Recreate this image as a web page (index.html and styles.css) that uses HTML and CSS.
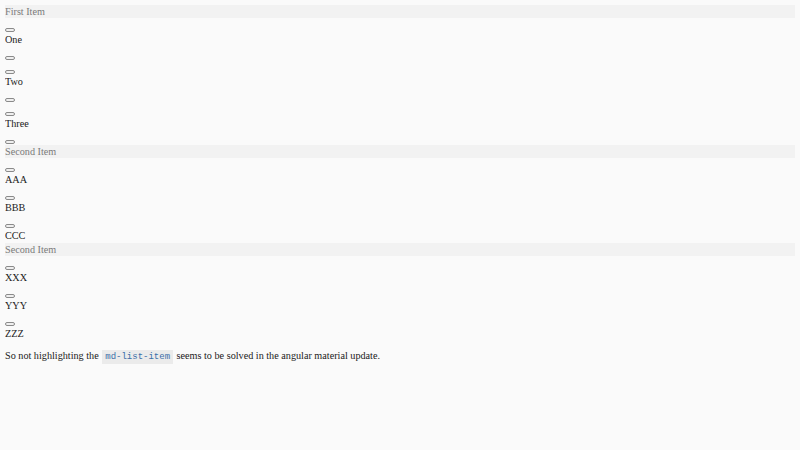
FILE: index.html
```html
<!DOCTYPE html>
<html lang="en">

<head>
    <meta charset="UTF-8">
    <meta name="viewport" content="width=device-width, initial-scale=1.0">
    <title>md-list</title>

    <link rel="stylesheet" href="styles.css">
</head>

<body>
    <div class="list">
        <div class="subheader">First Item</div>
        <div class="list-item">
            <button class="btn"></button>
            <div class="label">One</div>
            <button class="btn trail"></button>
        </div>
        <div class="list-item">
            <button class="btn"></button>
            <div class="label">Two</div>
            <button class="btn trail"></button>
        </div>
        <div class="list-item">
            <button class="btn"></button>
            <div class="label">Three</div>
            <button class="btn trail"></button>
        </div>

        <div class="subheader">Second Item</div>
        <div class="list-item">
            <button class="btn"></button>
            <div class="label">AAA</div>
        </div>
        <div class="list-item">
            <button class="btn"></button>
            <div class="label">BBB</div>
        </div>
        <div class="list-item">
            <button class="btn"></button>
            <div class="label">CCC</div>
        </div>

        <div class="subheader">Second Item</div>
        <div class="list-item">
            <button class="btn"></button>
            <div class="label">XXX</div>
        </div>
        <div class="list-item">
            <button class="btn"></button>
            <div class="label">YYY</div>
        </div>
        <div class="list-item">
            <button class="btn"></button>
            <div class="label">ZZZ</div>
        </div>
    </div>

    <p class="note">So not highlighting the <code>md-list-item</code> seems to be solved in the angular material update.</p>
</body>

</html>
```

FILE: styles.css
```css
body {
    margin: 5px;
    background-color: #fafafa;
    font-family: "Liberation Serif", "Times New Roman", serif;
    font-size: 10.2px;
    color: #212121;
}

.subheader {
    height: 13px;
    line-height: 13px;
    margin-top: 1px;
    background-color: #f2f2f2;
    color: #7a7a7a;
}

.subheader:first-child {
    margin-top: 0;
}

.list-item {
    padding-top: 10px;
}

.btn {
    display: block;
    width: 10px;
    height: 4px;
    padding: 0;
    margin: 0;
    box-sizing: border-box;
    border: 1px solid #8a8a8a;
    border-radius: 2px;
    background-color: #efefef;
}

.btn.trail {
    margin-top: 10px;
}

.label {
    margin-top: 2px;
    line-height: 12px;
}

.note {
    margin: 10px 0;
    line-height: 12px;
}

code {
    font-family: "Liberation Mono", "DejaVu Sans Mono", monospace;
    font-size: 9px;
    color: #3b6fa8;
    background-color: #ebebeb;
    padding: 2px 3px;
    margin: 0 1px;
}
```
